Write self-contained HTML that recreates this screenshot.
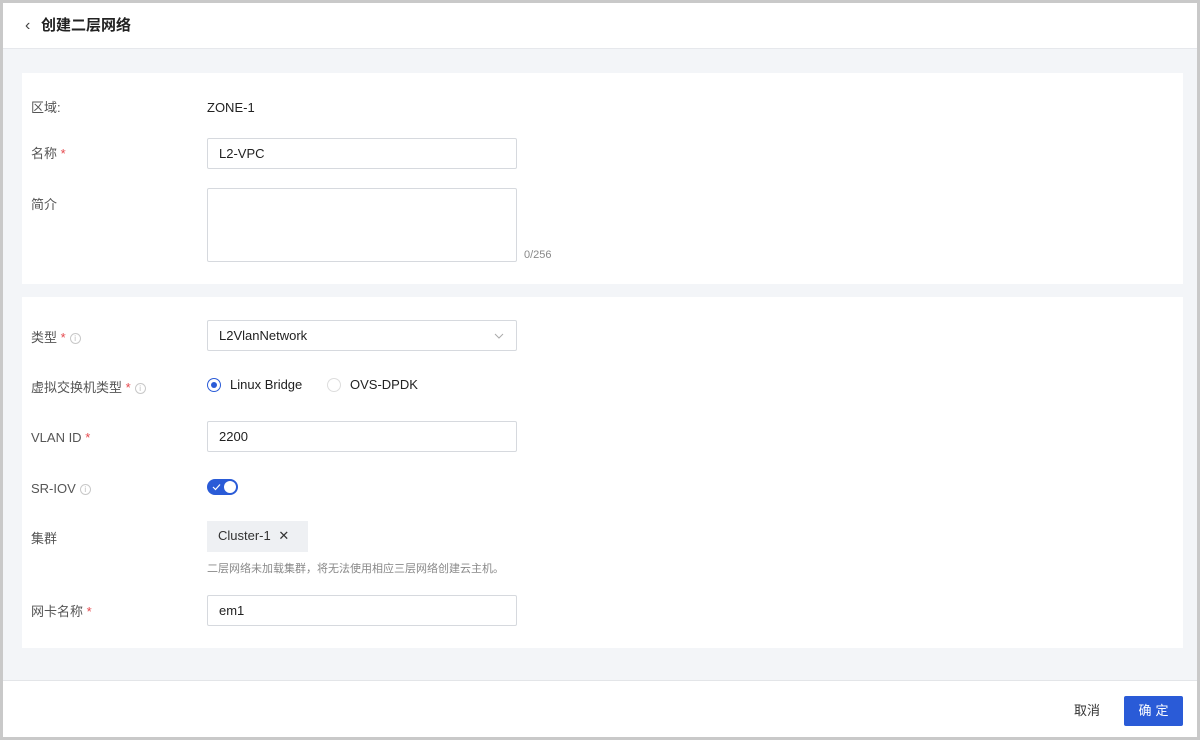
<!DOCTYPE html>
<html><head><meta charset="utf-8"><style>
*{box-sizing:border-box;margin:0;padding:0}
body{width:1200px;height:740px;background:#c9c9c9;font-family:"Liberation Sans","Noto Sans CJK SC",sans-serif;position:relative;overflow:hidden;color:#333}
.frame{position:absolute;left:3px;top:3px;width:1194px;height:734px;background:#f3f5f8}
.hdr{position:absolute;left:0;top:0;width:1194px;height:46px;background:#fff;border-bottom:1px solid #e6e8ec}
.hdr span{position:absolute;left:38px;top:13px;font-size:15px;line-height:20px;font-weight:bold;color:#222}
.hdr i{position:absolute;left:22px;top:13px;font-style:normal;font-size:16px;line-height:20px;color:#444}
.card{position:absolute;left:19px;width:1161px;background:#fff}
.a{position:absolute;font-size:13px;line-height:16px}
.lbl{color:#555;left:9px}
.st{color:#e5484d}
.inp{position:absolute;left:204px;width:310px;height:31px;border:1px solid #d6d9de;border-radius:2px;background:#fff;font-size:13px;line-height:15px;padding:7px 11px;color:#222}
.info{display:inline-block;width:11px;height:11px;border:1px solid #c8c8c8;border-radius:50%;font-size:8px;line-height:9px;text-align:center;color:#bbb;vertical-align:middle;margin-left:4px;font-style:normal}
.foot{position:absolute;left:0;top:677px;width:1194px;height:57px;background:#fff;border-top:1px solid #e3e5e8}
</style></head><body><div class="frame">
<div class="hdr"><i>‹</i><span>创建二层网络</span></div>
<div class="card" style="top:70px;height:211px">
<div class="a lbl" style="top:27px">区域:</div>
<div class="a" style="left:185px;top:27px;color:#222">ZONE-1</div>
<div class="a lbl" style="top:73px">名称 <span class="st">*</span></div>
<div class="inp" style="top:65px;left:185px">L2-VPC</div>
<div class="a lbl" style="top:124px">简介</div>
<div class="inp" style="top:115px;left:185px;height:74px"></div>
<div class="a" style="left:502px;top:174px;font-size:11px;color:#888">0/256</div>
</div>
<div class="card" style="top:294px;height:351px">
<div class="a lbl" style="top:33px">类型 <span class="st">*</span><i class="info">i</i></div>
<div class="inp" style="top:23px;left:185px">L2VlanNetwork<svg style="position:absolute;right:12px;top:12px" width="10" height="6"><path d="M1 1l4 4 4-4" fill="none" stroke="#aaa"/></svg></div>
<div class="a lbl" style="top:83px">虚拟交换机类型 <span class="st">*</span><i class="info">i</i></div>
<div class="a" style="left:185px;top:81px;width:14px;height:14px;border:1px solid #2a5bd7;border-radius:50%"><div style="margin:3px;width:6px;height:6px;border-radius:50%;background:#2a5bd7"></div></div>
<div class="a" style="left:208px;top:80px;color:#222">Linux Bridge</div>
<div class="a" style="left:305px;top:81px;width:14px;height:14px;border:1px solid #ddd;border-radius:50%"></div>
<div class="a" style="left:328px;top:80px;color:#222">OVS-DPDK</div>
<div class="a lbl" style="top:133px">VLAN ID <span class="st">*</span></div>
<div class="inp" style="top:124px;left:185px">2200</div>
<div class="a lbl" style="top:184px">SR-IOV<i class="info">i</i></div>
<div class="a" style="left:185px;top:182px;width:31px;height:16px;border-radius:8px;background:#2a5bd7"><svg style="position:absolute;left:5px;top:4px" width="9" height="8"><path d="M1 4l2.5 2.5L8 1.5" fill="none" stroke="#fff" stroke-width="1.2"/></svg><div style="position:absolute;right:2px;top:2px;width:12px;height:12px;border-radius:50%;background:#fff"></div></div>
<div class="a lbl" style="top:234px">集群</div>
<div class="a" style="left:185px;top:224px;width:101px;height:31px;background:#eef0f3;padding:7px 11px;color:#333">Cluster-1 <span style="margin-left:4px">✕</span></div>
<div class="a" style="left:185px;top:264px;font-size:11px;color:#888">二层网络未加载集群，将无法使用相应三层网络创建云主机。</div>
<div class="a lbl" style="top:307px">网卡名称 <span class="st">*</span></div>
<div class="inp" style="top:298px;left:185px">em1</div>
</div>
<div class="foot">
<div class="a" style="left:1071px;top:22px;color:#333">取消</div>
<div class="a" style="left:1121px;top:15px;width:59px;height:30px;background:#2a5bd7;border-radius:2px;color:#fff;text-align:center;line-height:30px;letter-spacing:4px;padding-left:4px">确定</div>
</div>
</div></body></html>
